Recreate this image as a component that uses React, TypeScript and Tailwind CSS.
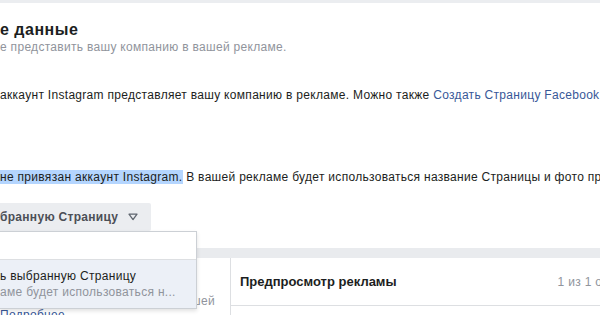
import React from "react";

const font = "font-['Liberation_Sans','Helvetica',Arial,sans-serif]";

function TriangleDown() {
  return (
    <svg width="10" height="8" viewBox="0 0 10 8" className="shrink-0">
      <path d="M1 1.2h8L5 6.6z" fill="none" stroke="#606770" strokeWidth="1.3" strokeLinejoin="round" />
    </svg>
  );
}

function PageDropdown() {
  return (
    <div className="absolute left-0 top-[231px] z-10 w-[197px] border border-l-0 border-[#ccd0d5] bg-white shadow-[0_2px_4px_rgba(0,0,0,0.12)]">
      <div className="h-[27px] bg-white" />
      <div className="h-[49px] border-t border-[#dddfe2] bg-[#ecf0f7] pt-[8px] leading-[16px] tracking-[0.3px]">
        <div className="whitespace-nowrap text-[12px] text-[#1c1e21]">ь выбранную Страницу</div>
        <div className="whitespace-nowrap text-[12px] text-[#90949c]">аме будет использоваться н...</div>
      </div>
    </div>
  );
}

export default function App() {
  return (
    <div className={`relative h-[315px] w-[600px] overflow-hidden bg-white tracking-[0.3px] ${font}`}>
      <div className="h-[3px] bg-[#ebedf0]" />

      <div className="pt-[17px]">
        <div className="whitespace-nowrap text-[16px] font-bold leading-[19px] tracking-[0.5px] text-[#1c1e21]">е данные</div>
        <div className="whitespace-nowrap text-[12px] leading-[16px] text-[#90949c]">
          е представить вашу компанию в вашей рекламе.
        </div>
      </div>

      <div className="mt-[32px] whitespace-nowrap text-[12px] leading-[16px] text-[#1c1e21]">
        аккаунт Instagram представляет вашу компанию в рекламе. Можно также{" "}
        <span className="text-[#385898]">Создать Страницу Facebook</span>
      </div>

      <div className="mt-[66px] whitespace-nowrap text-[12px] leading-[16px] text-[#1c1e21]">
        <span className="bg-[#b4d5fe]">не привязан аккаунт Instagram.</span> В вашей рекламе будет использоваться
        название Страницы и фото профиля.
      </div>

      <div className="mt-[18px] flex h-[28px] w-[151px] items-center gap-[10px] rounded-r-[2px] bg-[#ebedf0] pr-[14px]">
        <span className="whitespace-nowrap text-[12px] font-bold text-[#4b4f56]">бранную Страницу</span>
        <TriangleDown />
      </div>

      <div className="mt-[17px] h-[10px] bg-[#e9ebee]" />

      <div className="flex h-[60px]">
        <div className="w-[231px] shrink-0 border-r border-[#dddfe2] pt-[36px] text-[12px] leading-[14px]">
          <div className="w-[215px] whitespace-nowrap text-right text-[#90949c]">название и фото вашей</div>
          <div className="whitespace-nowrap text-[#385898]">Подробнее</div>
        </div>
        <div className="min-w-0 flex-1">
          <div className="flex h-[48px] items-center border-b border-[#dddfe2] pl-[9px]">
            <span className="whitespace-nowrap text-[13px] font-bold tracking-[0px] text-[#1c1e21]">Предпросмотр рекламы</span>
            <span className="ml-auto mr-[-65px] whitespace-nowrap text-[12px] text-[#90949c]">1 из 1 объявления</span>
          </div>
        </div>
      </div>

      <PageDropdown />
    </div>
  );
}
